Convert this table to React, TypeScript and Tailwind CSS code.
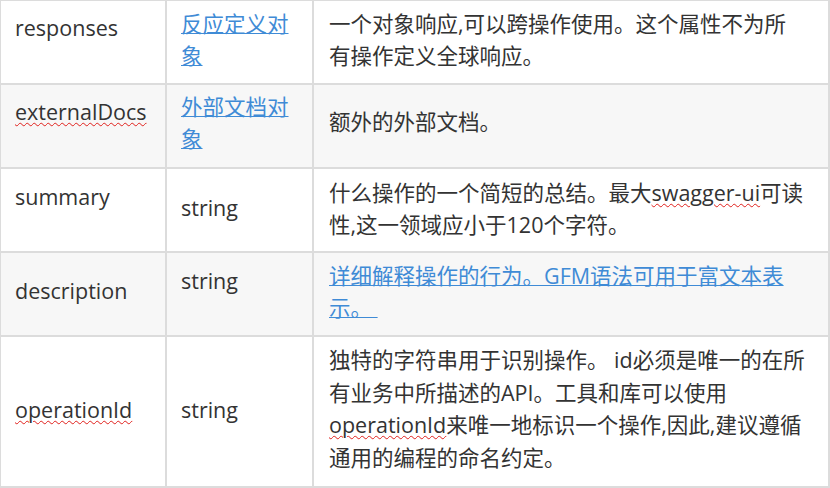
import React from 'react';

const spell = 'underline decoration-wavy decoration-[#e0201c] decoration-1 underline-offset-[2px]';
const link = 'text-[#3f8bd6] underline decoration-[#3f8bd6] decoration-1';

const App: React.FC = () => {
  return (
    <div
      className="w-[830px] h-[488px] overflow-hidden bg-white border-l border-t border-[#dcdcdc] text-[21.5px] leading-[32px] text-[#333]"
      style={{ fontFamily: '"Open Sans", "Noto Sans CJK SC", sans-serif' }}
    >
      {/* responses */}
      <div className="flex h-[84px] border-b-2 border-[#dcdcdc]">
        <div className="w-[166px] border-r-2 border-[#dcdcdc] pl-[14px] pt-[11px]">responses</div>
        <div className="w-[147px] border-r-2 border-[#dcdcdc] pl-[14px] pt-[7px]">
          <a className={link}>反应定义对<br />象</a>
        </div>
        <div className="w-[516px] border-r-2 border-[#dcdcdc] pl-[15px] pt-[7px]">
          一个对象响应,可以跨操作使用。这个属性不为所<br />有操作定义全球响应。
        </div>
      </div>

      {/* externalDocs */}
      <div className="flex h-[84px] border-b-2 border-[#dcdcdc] bg-[#f7f7f7]">
        <div className="w-[166px] border-r-2 border-[#dcdcdc] pl-[14px] pt-[11px]">
          <span className={spell}>externalDocs</span>
        </div>
        <div className="w-[147px] border-r-2 border-[#dcdcdc] pl-[14px] pt-[6px]">
          <a className={link}>外部文档对<br />象</a>
        </div>
        <div className="w-[516px] border-r-2 border-[#dcdcdc] pl-[15px] pt-[21px]">额外的外部文档。</div>
      </div>

      {/* summary */}
      <div className="flex h-[84px] border-b-2 border-[#dcdcdc]">
        <div className="w-[166px] border-r-2 border-[#dcdcdc] pl-[14px] pt-[12px]">summary</div>
        <div className="w-[147px] border-r-2 border-[#dcdcdc] pl-[14px] pt-[23px]">string</div>
        <div className="w-[516px] border-r-2 border-[#dcdcdc] pl-[15px] pt-[8px]">
          什么操作的一个简短的总结。最大<span className={spell}>swagger-ui</span>可读<br />
          性,这一领域应小于120个字符。
        </div>
      </div>

      {/* description */}
      <div className="flex h-[84px] border-b-2 border-[#dcdcdc] bg-[#f7f7f7]">
        <div className="w-[166px] border-r-2 border-[#dcdcdc] pl-[14px] pt-[22px]">description</div>
        <div className="w-[147px] border-r-2 border-[#dcdcdc] pl-[14px] pt-[12px]">string</div>
        <div className="w-[516px] border-r-2 border-[#dcdcdc] pl-[15px] pt-[7px]">
          <a className={link}>
            详细解释操作的行为。GFM语法可用于富文本表<br />示。{'\u00a0'}
          </a>
        </div>
      </div>

      {/* operationId */}
      <div className="flex h-[151px] border-b-2 border-[#dcdcdc]">
        <div className="w-[166px] border-r-2 border-[#dcdcdc] pl-[14px] pt-[57px]">
          <span className={spell}>operationId</span>
        </div>
        <div className="w-[147px] border-r-2 border-[#dcdcdc] pl-[14px] pt-[57px]">string</div>
        <div className="w-[516px] border-r-2 border-[#dcdcdc] pl-[15px] pt-[7px] leading-[32.7px]">
          独特的字符串用于识别操作。 id必须是唯一的在所<br />
          有业务中所描述的API。工具和库可以使用<br />
          <span className={spell}>operationId</span>来唯一地标识一个操作,因此,建议遵循<br />
          通用的编程的命名约定。
        </div>
      </div>
    </div>
  );
};

export default App;
